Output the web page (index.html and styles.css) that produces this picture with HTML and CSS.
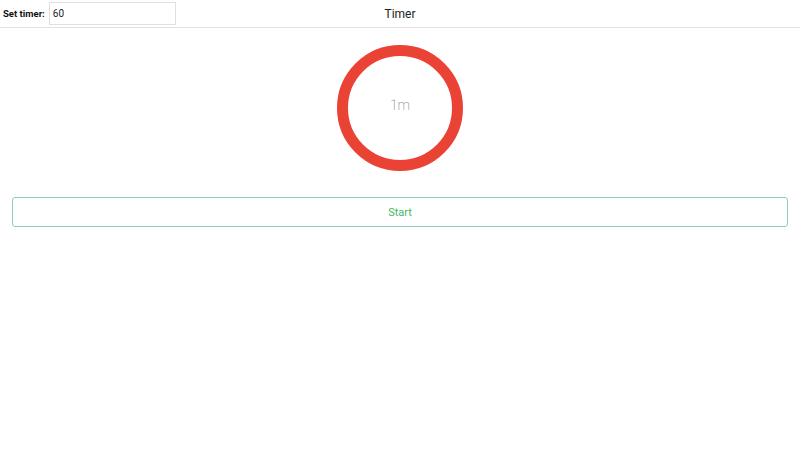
FILE: index.html
```html
<!DOCTYPE html>
<html>
<head>
<meta charset="utf-8">
<link rel="stylesheet" href="styles.css">
</head>
<body>
<header class="bar">
  <div class="setter">
    <label class="setter-label" for="t">Set timer:</label>
    <input id="t" class="setter-input" type="text" value="60">
  </div>
  <div class="title">Timer</div>
</header>
<main class="content">
  <div class="dial">
    <svg class="ring" width="128" height="128" viewBox="0 0 128 128">
      <circle cx="64" cy="64" r="57.5" fill="none" stroke="#ea4335" stroke-width="11"/>
    </svg>
    <span class="dial-text">1m</span>
  </div>
  <button class="start">Start</button>
</main>
</body>
</html>
```
FILE: styles.css
```css
html, body {
  margin: 0;
  padding: 0;
  background: #fff;
  font-family: Roboto, "Liberation Sans", sans-serif;
}
.bar {
  position: relative;
  height: 27px;
  border-bottom: 1px solid #e2e2e2;
  display: flex;
  align-items: center;
}
.setter {
  display: flex;
  align-items: center;
  padding-left: 3px;
  gap: 4px;
}
.setter-label {
  font-size: 9.5px;
  font-weight: 700;
  color: #111;
}
.setter-input {
  box-sizing: border-box;
  width: 127px;
  height: 23px;
  border: 1px solid #e0e0e0;
  padding: 0 3px;
  font-family: Roboto, "Liberation Sans", sans-serif;
  font-size: 10px;
  color: #222;
  outline: none;
}
.title {
  position: absolute;
  left: 0;
  right: 0;
  top: 7px;
  text-align: center;
  font-size: 12px;
  font-weight: 400;
  color: #222;
  pointer-events: none;
}
.content {
  display: flex;
  flex-direction: column;
  align-items: center;
  padding: 16px 12px 0;
}
.dial {
  position: relative;
  width: 128px;
  height: 128px;
  display: flex;
  align-items: center;
  justify-content: center;
}
.ring {
  position: absolute;
  left: 0;
  top: 0;
}
.dial-text {
  position: relative;
  font-size: 14px;
  font-weight: 200;
  color: #888;
  margin-top: -6px;
}
.start {
  box-sizing: border-box;
  margin-top: 25px;
  width: 100%;
  height: 30px;
  background: #fff;
  border: 1px solid #8ed0ad;
  border-radius: 3px;
  color: #3fb965;
  font-family: Roboto, "Liberation Sans", sans-serif;
  font-size: 11px;
}
```
